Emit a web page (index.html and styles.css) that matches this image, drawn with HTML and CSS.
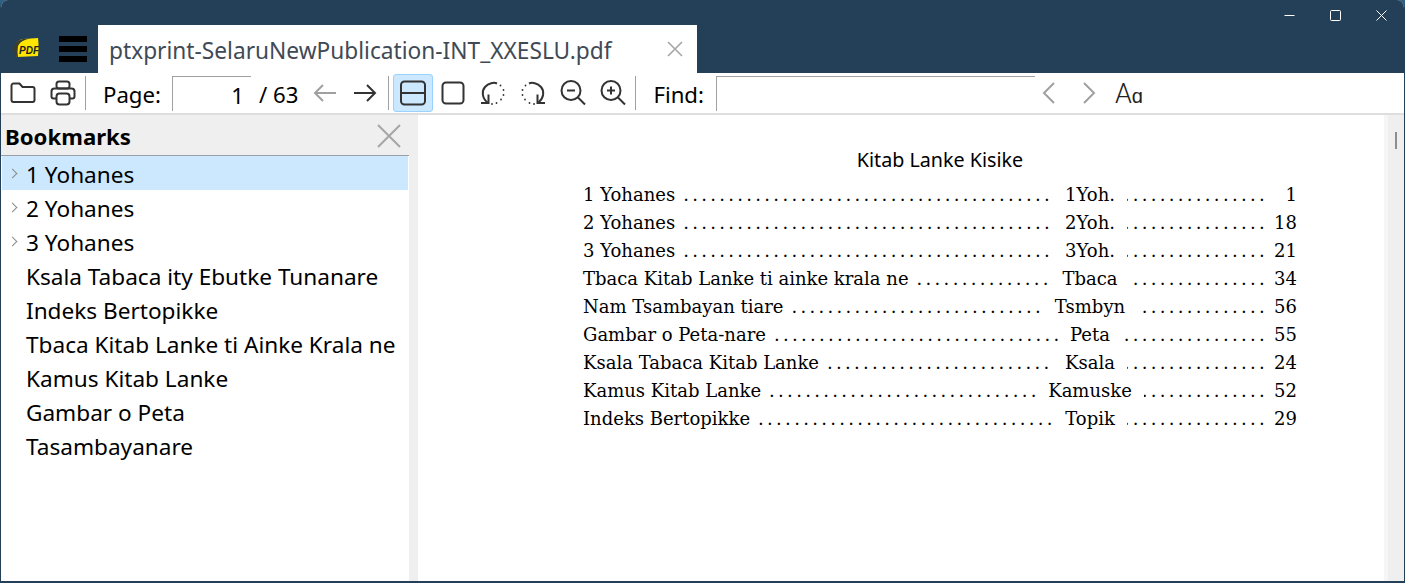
FILE: index.html
```html
<!DOCTYPE html>
<html lang="en">
<head>
<meta charset="utf-8">
<title>ptxprint-SelaruNewPublication-INT_XXESLU.pdf</title>
<link rel="stylesheet" href="styles.css">
</head>
<body>
<div class="window">
  <header class="titlebar">
    <div class="caption">
      <svg class="cap-icon" viewBox="0 0 11 11"><path d="M0.500 5.500h10"/></svg>
      <svg class="cap-icon" viewBox="0 0 11 11"><rect x="0.500" y="0.500" width="10" height="10" rx="1"/></svg>
      <svg class="cap-icon" viewBox="0 0 11 11"><path d="M0.500 0.500l10 10M10.500 0.500l-10 10"/></svg>
    </div>
    <div class="tabrow">
      <div class="logo">
        <svg viewBox="0 0 28 24" width="28" height="24"><path d="M4 9Q6 3 12 2L27 1Q28 8 27 19L6 20Q3 15 4 9Z" fill="#ffe600"/><path d="M3 10Q5 3 12 2L20 1.500Q9 3 7 9Q6 15 7 20L6 20Q2 15 3 10Z" fill="#3c3c2c"/></svg>
        <span class="logo-text">PDF</span>
      </div>
      <div class="menu"><i></i><i></i><i></i></div>
      <div class="tab">
        <span class="tab-title">ptxprint-SelaruNewPublication-INT_XXESLU.pdf</span>
        <svg class="tab-close" viewBox="0 0 16 16"><path d="M1 1l14 14M15 1L1 15"/></svg>
      </div>
    </div>
  </header>
  <div class="toolbar">
    <button class="tool first"><svg viewBox="0 0 28 28"><path d="M2.500 6.500a2 2 0 0 1 2-2h6l3 3.500h10a2 2 0 0 1 2 2v11a2 2 0 0 1-2 2h-19a2 2 0 0 1-2-2z"/></svg></button>
    <button class="tool"><svg viewBox="0 0 28 28"><rect x="7.500" y="2.500" width="13" height="7" rx="2.500"/><path d="M7 19.500H4.500a2 2 0 0 1-2-2v-5a3 3 0 0 1 3-3h17a3 3 0 0 1 3 3v5a2 2 0 0 1-2 2H21"/><rect x="7.500" y="14.500" width="13" height="11" rx="3"/></svg></button>
    <span class="sep"></span>
    <span class="label page-label">Page:</span>
    <span class="input page-input">1</span>
    <span class="label total">/ 63</span>
    <button class="tool off arrow-first"><svg viewBox="0 0 28 28"><path d="M25 14H4M12 6l-8 8 8 8"/></svg></button>
    <button class="tool"><svg viewBox="0 0 28 28"><path d="M3 14h21M16 6l8 8-8 8"/></svg></button>
    <span class="sep wide"></span>
    <button class="tool active"><svg viewBox="0 0 28 28"><rect x="2" y="2.500" width="24" height="23" rx="3.500"/><path d="M2 14h24"/></svg></button>
    <button class="tool"><svg viewBox="0 0 28 28"><rect x="3.500" y="3.500" width="21" height="21" rx="3.500"/></svg></button>
    <button class="tool"><svg viewBox="0 0 28 28"><path d="M8.500 23.500C3 19 2.500 12 6 8s9-5 12-3.500"/><path d="M9.500 15.500v8.500H2"/><path class="dots" d="M21.500 6.500h.01M24.500 11h.01M24.500 16h.01M22 20.500h.01M17.500 24h.01M13 25h.01"/></svg></button>
    <button class="tool"><svg viewBox="0 0 28 28"><path d="M19.500 23.500C25 19 25.500 12 22 8s-9-5-12-3.500"/><path d="M18.500 15.500v8.500H26"/><path class="dots" d="M6.500 6.500h.01M3.500 11h.01M3.500 16h.01M6 20.500h.01M10.500 24h.01M15 25h.01"/></svg></button>
    <button class="tool"><svg viewBox="0 0 28 28"><circle cx="12" cy="11.500" r="9.500"/><path d="M8 11.500h8M19 18.500l7 7"/></svg></button>
    <button class="tool"><svg viewBox="0 0 28 28"><circle cx="12" cy="11.500" r="9.500"/><path d="M8 11.500h8M12 7.500v8M19 18.500l7 7"/></svg></button>
    <span class="sep"></span>
    <span class="label find-label">Find:</span>
    <span class="input find-input"></span>
    <button class="tool off narrow chevron-first"><svg viewBox="0 0 28 28"><path d="M19 4L9 14l10 10"/></svg></button>
    <button class="tool off narrow"><svg viewBox="0 0 28 28"><path d="M9 4l10 10-10 10"/></svg></button>
    <span class="match-case">A<span>ɑ</span></span>
  </div>
  <div class="main">
    <aside class="sidebar">
      <div class="side-head">
        <span class="side-title">Bookmarks</span>
        <svg class="side-close" viewBox="0 0 24 24"><path d="M1 1l22 22M23 1L1 23"/></svg>
      </div>
      <ul class="tree">
        <li class="selected has-kids">1 Yohanes</li>
        <li class="has-kids">2 Yohanes</li>
        <li class="has-kids">3 Yohanes</li>
        <li>Ksala Tabaca ity Ebutke Tunanare</li>
        <li>Indeks Bertopikke</li>
        <li>Tbaca Kitab Lanke ti Ainke Krala ne</li>
        <li>Kamus Kitab Lanke</li>
        <li>Gambar o Peta</li>
        <li>Tasambayanare</li>
      </ul>
    </aside>
    <div class="splitter"></div>
    <section class="doc">
      <h1 class="doc-title">Kitab Lanke Kisike</h1>
      <div class="toc">
        <div class="row"><span class="left"><span>1 Yohanes</span><i class="dots-run"></i></span><span class="pivot"><b>1Yoh.</b></span><span class="right"><i class="dots-run"></i><span class="num">1</span></span></div>
        <div class="row"><span class="left"><span>2 Yohanes</span><i class="dots-run"></i></span><span class="pivot"><b>2Yoh.</b></span><span class="right"><i class="dots-run"></i><span class="num">18</span></span></div>
        <div class="row"><span class="left"><span>3 Yohanes</span><i class="dots-run"></i></span><span class="pivot"><b>3Yoh.</b></span><span class="right"><i class="dots-run"></i><span class="num">21</span></span></div>
        <div class="row"><span class="left"><span>Tbaca Kitab Lanke ti ainke krala ne</span><i class="dots-run"></i></span><span class="pivot"><b>Tbaca</b></span><span class="right"><i class="dots-run"></i><span class="num">34</span></span></div>
        <div class="row"><span class="left"><span>Nam Tsambayan tiare</span><i class="dots-run"></i></span><span class="pivot"><b>Tsmbyn</b></span><span class="right"><i class="dots-run"></i><span class="num">56</span></span></div>
        <div class="row"><span class="left"><span>Gambar o Peta-nare</span><i class="dots-run"></i></span><span class="pivot"><b>Peta</b></span><span class="right"><i class="dots-run"></i><span class="num">55</span></span></div>
        <div class="row"><span class="left"><span>Ksala Tabaca Kitab Lanke</span><i class="dots-run"></i></span><span class="pivot"><b>Ksala</b></span><span class="right"><i class="dots-run"></i><span class="num">24</span></span></div>
        <div class="row"><span class="left"><span>Kamus Kitab Lanke</span><i class="dots-run"></i></span><span class="pivot"><b>Kamuske</b></span><span class="right"><i class="dots-run"></i><span class="num">52</span></span></div>
        <div class="row"><span class="left"><span>Indeks Bertopikke</span><i class="dots-run"></i></span><span class="pivot"><b>Topik</b></span><span class="right"><i class="dots-run"></i><span class="num">29</span></span></div>
      </div>
    </section>
    <div class="scrollbar"><span class="thumb"></span></div>
  </div>
</div>
</body>
</html>
```
FILE: styles.css
```css
* { box-sizing: border-box; }
html, body { margin: 0; height: 100%; overflow: hidden; }
body { background: #2f5f85; font-family: "Noto Sans", sans-serif; color: #000; }
.window { width: 1405px; height: 583px; display: flex; flex-direction: column; background: #fff; border: solid #234058; border-width: 0 1px 2px 1px; border-radius: 8px 8px 0 0; overflow: hidden; }

.titlebar { height: 73px; flex: none; background: #234058; display: flex; flex-direction: column; }
.caption { height: 25px; flex: none; display: flex; justify-content: flex-end; align-items: flex-start; padding: 10px 17px 0 0; gap: 35px; }
.cap-icon { width: 11px; height: 11px; fill: none; stroke: #fff; stroke-width: 1; }
.tabrow { height: 48px; flex: none; display: flex; }
.logo { width: 44px; margin-left: 10px; height: 48px; position: relative; padding-top: 12px; flex: none; }
.logo svg { display: block; }
.logo-text { position: absolute; left: 8px; top: 20px; font: italic 700 10px/12px "Liberation Sans", sans-serif; color: #222; }
.menu { width: 28px; margin: 11px 11px 0 4px; flex: none; display: flex; flex-direction: column; gap: 4px; }
.menu i { display: block; height: 6px; background: #000; }
.tab { width: 599px; height: 48px; background: #fff; display: flex; align-items: center; justify-content: space-between; padding: 2px 14px 0 11px; flex: none; }
.tab-title { font-size: 22.700px; color: #3f4a55; white-space: nowrap; }
.tab-close { width: 16px; height: 16px; fill: none; stroke: #a6a6a6; stroke-width: 1.600; margin-top: -2px; }

.toolbar { height: 42px; flex: none; background: #fff; border-bottom: 2px solid #dedede; display: flex; align-items: center; padding-left: 2px; }
.tool { width: 40px; height: 38px; padding: 0; border: 1px solid transparent; background: none; display: flex; align-items: center; justify-content: center; flex: none; border-radius: 3px; }
.tool svg { width: 28px; height: 28px; fill: none; stroke: #333; stroke-width: 2; }
.tool .dots { stroke-linecap: round; stroke-width: 1.800; }
.tool.off svg { stroke: #a0a0a0; }
.tool.active { background: #cce8ff; border-color: #99d1ff; }
.arrow-first { margin-left: 7px; }
.chevron-first { margin-left: -6px; }
.sep { width: 1px; height: 34px; background: #a0a0a0; flex: none; margin: 0 2px; }
.sep.wide { margin: 0 4px 0 3px; }
.label { font-size: 22.200px; line-height: 36px; padding-top: 4px; white-space: nowrap; flex: none; }
.page-label { margin-left: 15px; }
.input { height: 35px; border: solid #a0a0a0; border-width: 1px 0 0 1px; align-self: flex-end; margin-bottom: 2px; flex: none; font-size: 22.200px; line-height: 38px; text-align: right; }
.page-input { width: 79px; margin-left: 11px; padding-right: 7px; }
.total { margin-left: 8px; }
.find-label { margin-left: 15px; }
.find-input { width: 319px; margin-left: 12px; }
.match-case { font: 300 27px/1 Roboto, sans-serif; margin-left: 6px; color: #222; padding-top: 2px; }
.match-case span { font-size: 20px; }

.main { flex: 1; min-height: 0; display: flex; }
.sidebar { width: 408px; flex: none; background: #fff; display: flex; flex-direction: column; padding: 0 1px; }
.side-head { height: 41px; flex: none; background: #efefef; border-bottom: 1px solid #9aa0a6; display: flex; align-items: center; justify-content: space-between; padding: 2px 8px 0 4px; margin: 0 -1px; }
.side-title { font-size: 22.200px; font-weight: 700; }
.side-close { width: 24px; height: 24px; fill: none; stroke: #a6a6a6; stroke-width: 2; }
.tree { list-style: none; margin: 0; padding: 0; font-size: 22.600px; }
.tree li { height: 34px; line-height: 38px; padding-left: 24px; white-space: nowrap; position: relative; }
.tree li.selected { background: #cce8ff; }
.tree li.has-kids::before { content: ""; position: absolute; left: 7px; top: 14px; width: 6px; height: 6px; border: solid #8a8a8a; border-width: 1.500px 1.500px 0 0; transform: rotate(45deg); }
.splitter { width: 9px; flex: none; background: #efefef; }
.doc { flex: 1; min-width: 0; background: #fff; display: flex; flex-direction: column; align-items: center; padding-left: 78px; }
.doc-title { margin: 31px 0 0; font-size: 19.700px; font-weight: 400; line-height: 28px; }
.toc { width: 714px; margin: 7px 0 0; font: 400 18px/28px "DejaVu Serif", serif; }
.row { display: flex; height: 28px; white-space: nowrap; }
.left { width: 507px; display: flex; flex: none; }
.right { flex: 1; display: flex; min-width: 0; }
.dots-run { flex: 1; min-width: 0; overflow: hidden; margin: 0 8px; font-style: normal; }
.dots-run::after { content: "..............................................."; letter-spacing: 3.300px; }
.right .dots-run { direction: rtl; margin: 0 5px 0 0; }
.num { width: 24px; text-align: right; flex: none; }
.pivot { width: 0; display: flex; justify-content: center; flex: none; position: relative; z-index: 1; }
.pivot b { font-weight: 400; background: #fff; padding: 0 12px; flex: none; }
.scrollbar { width: 20px; flex: none; background: #efefef; border-left: 4px solid #f6f6f6; padding: 17px 0 0 7px; }
.thumb { display: block; width: 2px; height: 17px; background: #8e8e8e; }
```
